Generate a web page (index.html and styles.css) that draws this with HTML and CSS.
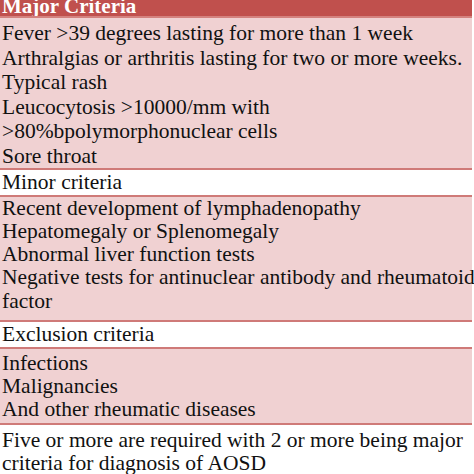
FILE: index.html
```html
<!DOCTYPE html>
<html>
<head>
<meta charset="utf-8">
<link rel="stylesheet" href="styles.css">
</head>
<body>
<div class="table">
  <div class="head">Major Criteria</div>
  <div class="band pink major">
    <div class="line">Fever &gt;39 degrees lasting for more than 1 week</div>
    <div class="line">Arthralgias or arthritis lasting for two or more weeks.</div>
    <div class="line">Typical rash</div>
    <div class="line">Leucocytosis &gt;10000/mm with</div>
    <div class="line">&gt;80%bpolymorphonuclear cells</div>
    <div class="line">Sore throat</div>
  </div>
  <div class="band white title">
    <div class="line">Minor criteria</div>
  </div>
  <div class="band pink minor">
    <div class="line">Recent development of lymphadenopathy</div>
    <div class="line">Hepatomegaly or Splenomegaly</div>
    <div class="line">Abnormal liver function tests</div>
    <div class="line">Negative tests for antinuclear antibody and rheumatoid</div>
    <div class="line">factor</div>
  </div>
  <div class="band white title">
    <div class="line">Exclusion criteria</div>
  </div>
  <div class="band pink exclusion">
    <div class="line">Infections</div>
    <div class="line">Malignancies</div>
    <div class="line">And other rheumatic diseases</div>
  </div>
  <div class="band white foot">
    <div class="line">Five or more are required with 2 or more being major</div>
    <div class="line">criteria for diagnosis of AOSD</div>
  </div>
</div>
</body>
</html>
```
FILE: styles.css
```css
html, body {
  margin: 0;
  padding: 0;
  background: #ffffff;
}
body {
  font-family: "Liberation Serif", "Times New Roman", serif;
  color: #111111;
  overflow: hidden;
}
.table {
  width: 472px;
}
.head {
  height: 16px;
  line-height: 12px;
  background: #c0504d;
  color: #ffffff;
  font-weight: bold;
  font-size: 21px;
  padding-left: 2px;
  border-bottom: 2px solid #d4827f;
  overflow: hidden;
}
.band {
  padding-left: 2px;
  font-size: 21.5px;
  line-height: 24.5px;
}
.pink {
  background: #f0d1d2;
  border-bottom: 2px solid #cf7a78;
}
.major {
  padding-top: 3px;
}
.minor {
  line-height: 23.25px;
  padding-bottom: 7px;
}
.exclusion {
  line-height: 23px;
  padding-top: 3.5px;
  padding-bottom: 1.5px;
}
.white {
  background: #ffffff;
}
.title {
  border-bottom: 2px solid #cf7a78;
}
.title + .exclusion {
  margin-top: 0;
}
.minor + .title {
  line-height: 25px;
}
.foot {
  line-height: 23px;
  padding-top: 4.5px;
}
.line {
  white-space: nowrap;
}
```
